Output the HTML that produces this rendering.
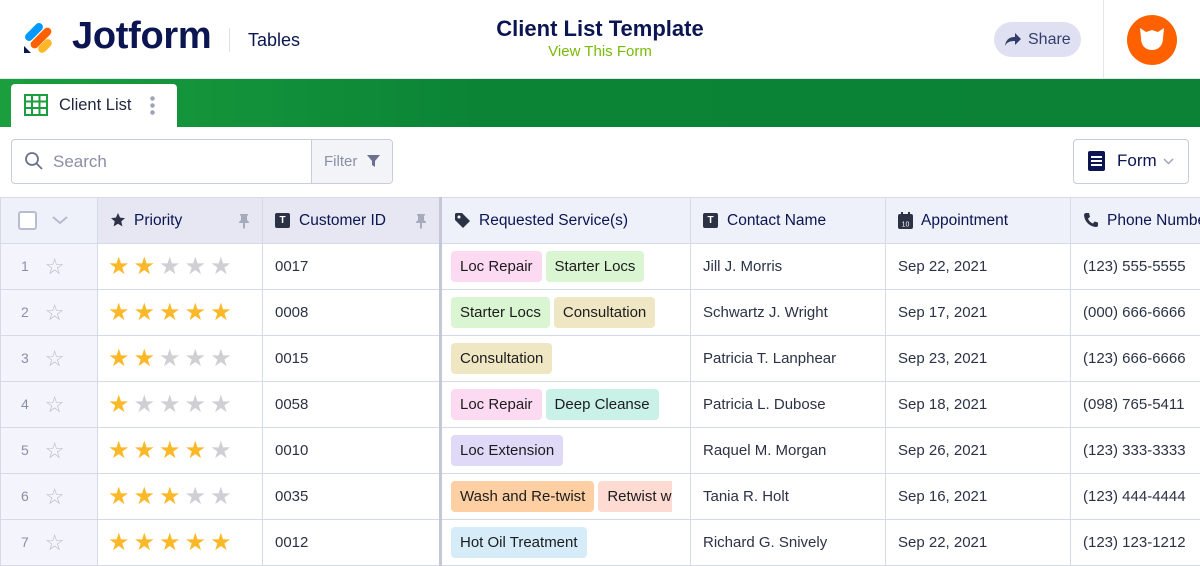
<!DOCTYPE html>
<html><head><meta charset="utf-8"><style>
*{box-sizing:border-box;margin:0;padding:0}
body{width:1200px;height:566px;overflow:hidden;background:#fff;font-family:"Liberation Sans",sans-serif;color:#0a1551;position:relative}
.hdr{position:absolute;left:0;top:0;width:1200px;height:79px;background:#fff;border-bottom:1px solid #e3e5f0}
.green{position:absolute;left:0;top:79px;width:1200px;height:48px;background:linear-gradient(90deg,#1a9e3e,#0b8436 40%,#0b8236)}
.tab{position:absolute;left:11px;top:84px;width:166px;height:43px;background:#fff;border-radius:4px 4px 0 0}
.abs{position:absolute}
table{position:absolute;left:0;top:197px;width:1210px;border-collapse:collapse;table-layout:fixed}
td,th{border:1px solid #d6d9e8;height:46px;font-size:15px;color:#2b3245;font-weight:normal;text-align:left;padding:0 12px;white-space:nowrap;overflow:hidden;vertical-align:middle;line-height:20px}
th{background:#eef0fa;color:#0a1551;font-size:15.5px;height:46px}
th.dk{background:#e6e7f2}
td.rn{background:#f3f4fc;color:#8a8fa6;font-size:14px;padding-left:20px}
.tag{display:inline-block;padding:0 9px;height:31px;line-height:31px;border-radius:4px;margin-right:4px;color:#1c1c1c;vertical-align:middle}
.st{font-size:24px;letter-spacing:4px;padding-left:10px}
.y{color:#fbb829}.g{color:#cfcfd4}
.ic{display:inline-block;vertical-align:middle;margin-right:8px}
.T{display:inline-block;width:15px;height:15px;background:#2b3245;color:#fff;font-size:10px;text-align:center;line-height:15px;border-radius:2px;vertical-align:middle;margin-right:9px;font-weight:bold}
.pin{float:right;margin-top:2px}
.rs{margin-left:16px;font-size:22px;color:#b8bccd;vertical-align:middle}
</style></head><body>
<div class="hdr">
 <svg class="abs" style="left:22px;top:20px" width="34" height="34" viewBox="0 0 34 34">
  <rect x="1" y="8" width="22" height="8" rx="4" transform="rotate(-45 12 12)" fill="#0099ff"/>
  <rect x="6" y="14" width="26" height="8" rx="4" transform="rotate(-45 19 18)" fill="#ff6100"/>
  <rect x="15" y="22" width="16" height="8" rx="4" transform="rotate(-45 23 26)" fill="#ffb629"/>
  <path d="M2 26 L2 33 L9 33 Z" fill="#0a1551"/>
 </svg>
 <div class="abs" style="left:72px;top:15px;font-size:38px;font-weight:bold;color:#0a1551;letter-spacing:-0.3px">Jotform</div>
 <div class="abs" style="left:229px;top:28px;width:1px;height:24px;background:#dfe1ea"></div>
 <div class="abs" style="left:248px;top:30px;font-size:18px;color:#0a1551">Tables</div>
 <div class="abs" style="left:0;width:1200px;top:16px;text-align:center;font-size:22px;font-weight:bold;color:#0a1551">Client List Template</div>
 <div class="abs" style="left:0;width:1200px;top:43px;text-align:center;font-size:15px;color:#78bb07">View This Form</div>
 <div class="abs" style="left:994px;top:22px;width:87px;height:35px;border-radius:18px;background:#dfe1f3;font-size:16px;color:#343c6a;line-height:35px;padding-left:34px">Share</div>
 <svg class="abs" style="left:1004px;top:32px" width="18" height="15" viewBox="0 0 18 15"><path d="M1 14 C2 7 6 5 11 5 L11 1 L17 7 L11 13 L11 9 C6 9 3 10 1 14Z" fill="#343c6a"/></svg>
 <div class="abs" style="left:1103px;top:0;width:1px;height:79px;background:#e3e5f0"></div>
 <div class="abs" style="left:1127px;top:15px;width:50px;height:50px;border-radius:50%;background:#ff6100"></div>
 <svg class="abs" style="left:1137px;top:24px" width="30" height="28" viewBox="0 0 30 28"><path d="M3 4 L9 8 L15 6 L21 8 L27 4 L26 14 C26 22 21 26 15 26 C9 26 4 22 4 14 Z" fill="#fff"/></svg>
</div>
<div class="green"></div>
<div class="tab">
 <svg class="abs" style="left:13px;top:10px" width="24" height="22" viewBox="0 0 24 22"><rect x="1" y="1" width="22" height="20" fill="none" stroke="#1a9e3e" stroke-width="2"/><path d="M1 7.5H23M1 14H23M8 1V21M15.5 1V21" stroke="#1a9e3e" stroke-width="2"/></svg>
 <div class="abs" style="left:48px;top:12px;font-size:16.5px;color:#1f2540">Client List</div>
 <div class="abs" style="left:139px;top:11px;width:5px;height:20px;background:radial-gradient(circle,#9ea3b8 2px,transparent 2.5px) 0 0/5px 7px repeat-y"></div>
</div>
<div class="abs" style="left:11px;top:139px;width:382px;height:45px;border:1px solid #c8ccdc;border-radius:4px"></div>
<div class="abs" style="left:311px;top:140px;width:81px;height:43px;background:#f3f4f8;border-left:1px solid #c8ccdc;border-radius:0 4px 4px 0;font-size:15px;color:#8a8fa6;line-height:43px;padding-left:12px">Filter</div>
<svg class="abs" style="left:367px;top:155px" width="13" height="13" viewBox="0 0 13 13"><path d="M0 0H13L8 6V12L5 10V6Z" fill="#6b7091"/></svg>
<svg class="abs" style="left:25px;top:152px" width="18" height="18" viewBox="0 0 18 18"><circle cx="7" cy="7" r="6" fill="none" stroke="#6b7091" stroke-width="1.8"/><path d="M11.5 11.5L17 17" stroke="#6b7091" stroke-width="1.8"/></svg>
<div class="abs" style="left:53px;top:152px;font-size:17px;color:#8a8fa6">Search</div>
<div class="abs" style="left:1073px;top:139px;width:116px;height:45px;border:1px solid #c8ccdc;border-radius:4px"></div>
<div class="abs" style="left:1088px;top:151px;width:17px;height:20px;background:#0a1551;border-radius:2px"></div>
<div class="abs" style="left:1091px;top:156px;width:11px;height:2px;background:#fff"></div>
<div class="abs" style="left:1091px;top:160px;width:11px;height:2px;background:#fff"></div>
<div class="abs" style="left:1091px;top:164px;width:11px;height:2px;background:#fff"></div>
<div class="abs" style="left:1117px;top:151px;font-size:17px;color:#0a1551">Form</div>
<svg class="abs" style="left:1163px;top:158px" width="11" height="7" viewBox="0 0 11 7"><path d="M1 1L5.5 5.5L10 1" fill="none" stroke="#9ea3b8" stroke-width="1.5"/></svg>
<table>
<colgroup><col style="width:97px"><col style="width:165px"><col style="width:178px"><col style="width:250px"><col style="width:195px"><col style="width:185px"><col style="width:140px"></colgroup>
<tr><th style="padding-left:17px"><span style="display:inline-block;width:19px;height:19px;border:2px solid #b8bccd;border-radius:3px;vertical-align:middle;background:#fff"></span><svg style="margin-left:15px;vertical-align:middle" width="16" height="9" viewBox="0 0 16 9"><path d="M1 1L8 7L15 1" fill="none" stroke="#b8bccd" stroke-width="2"/></svg></th>
<th class="dk"><svg class="ic" width="16" height="16" viewBox="0 0 24 24"><path d="M12 1.5l3.1 6.9 7.4.7-5.6 5 1.7 7.4L12 17.6l-6.6 3.9 1.7-7.4-5.6-5 7.4-.7z" fill="#2b3245"/></svg>Priority<svg class="pin" width="12" height="16" viewBox="0 0 12 16"><path d="M2 1H10V2L9 3V7L11 9V10H7V15L6 16L5 15V10H1V9L3 7V3L2 2Z" fill="#a6aabd"/></svg></th>
<th class="dk" style="border-right:3px solid #c4c7d6"><span class="T">T</span>Customer ID<svg class="pin" width="12" height="16" viewBox="0 0 12 16"><path d="M2 1H10V2L9 3V7L11 9V10H7V15L6 16L5 15V10H1V9L3 7V3L2 2Z" fill="#a6aabd"/></svg></th>
<th><svg class="ic" width="17" height="17" viewBox="0 0 17 17"><path d="M1 2V8L9 16L16 9L8 1H2Z" fill="#2b3245"/><circle cx="5" cy="5" r="1.5" fill="#fff"/></svg>Requested Service(s)</th>
<th><span class="T">T</span>Contact Name</th>
<th><svg class="ic" width="15" height="17" viewBox="0 0 15 17"><rect x="0" y="2" width="15" height="15" rx="2" fill="#2b3245"/><rect x="3" y="0" width="2" height="4" fill="#2b3245"/><rect x="10" y="0" width="2" height="4" fill="#2b3245"/><text x="7.5" y="14.5" font-size="7" fill="#fff" text-anchor="middle" font-family="Liberation Sans">10</text></svg>Appointment</th>
<th><svg class="ic" width="16" height="16" viewBox="0 0 16 16"><path d="M3 1L6 1L7 5L5 6.5C6 9 7.5 10.5 10 11.5L11.5 9.5L15 10.5V13.5C15 14.5 14 15 13 15C6.5 14.5 1.5 9.5 1 3C1 2 2 1 3 1Z" fill="#2b3245"/></svg>Phone Number</th></tr>
<tr><td class="rn">1<span class="rs">☆</span></td><td class="st"><span class="y">★★</span><span class="g">★★★</span></td><td style="border-right:3px solid #c4c7d6">0017</td><td style="padding-left:9px"><span class="tag" style="background:#fcdaf2">Loc Repair</span><span class="tag" style="background:#daf5d2">Starter Locs</span></td><td>Jill J. Morris</td><td>Sep 22, 2021</td><td>(123) 555-5555</td></tr>
<tr><td class="rn">2<span class="rs">☆</span></td><td class="st"><span class="y">★★★★★</span></td><td style="border-right:3px solid #c4c7d6">0008</td><td style="padding-left:9px"><span class="tag" style="background:#daf5d2">Starter Locs</span><span class="tag" style="background:#efe7c4">Consultation</span></td><td>Schwartz J. Wright</td><td>Sep 17, 2021</td><td>(000) 666-6666</td></tr>
<tr><td class="rn">3<span class="rs">☆</span></td><td class="st"><span class="y">★★</span><span class="g">★★★</span></td><td style="border-right:3px solid #c4c7d6">0015</td><td style="padding-left:9px"><span class="tag" style="background:#efe7c4">Consultation</span></td><td>Patricia T. Lanphear</td><td>Sep 23, 2021</td><td>(123) 666-6666</td></tr>
<tr><td class="rn">4<span class="rs">☆</span></td><td class="st"><span class="y">★</span><span class="g">★★★★</span></td><td style="border-right:3px solid #c4c7d6">0058</td><td style="padding-left:9px"><span class="tag" style="background:#fcdaf2">Loc Repair</span><span class="tag" style="background:#c9f1e8">Deep Cleanse</span></td><td>Patricia L. Dubose</td><td>Sep 18, 2021</td><td>(098) 765-5411</td></tr>
<tr><td class="rn">5<span class="rs">☆</span></td><td class="st"><span class="y">★★★★</span><span class="g">★</span></td><td style="border-right:3px solid #c4c7d6">0010</td><td style="padding-left:9px"><span class="tag" style="background:#e0d9f7">Loc Extension</span></td><td>Raquel M. Morgan</td><td>Sep 26, 2021</td><td>(123) 333-3333</td></tr>
<tr><td class="rn">6<span class="rs">☆</span></td><td class="st"><span class="y">★★★</span><span class="g">★★</span></td><td style="border-right:3px solid #c4c7d6">0035</td><td style="padding-left:9px"><span class="tag" style="background:#fdcfa2">Wash and Re-twist</span><span class="tag" style="background:#fddbd2;width:74px;overflow:hidden;border-radius:4px 0 0 4px">Retwist w</span></td><td>Tania R. Holt</td><td>Sep 16, 2021</td><td>(123) 444-4444</td></tr>
<tr><td class="rn">7<span class="rs">☆</span></td><td class="st"><span class="y">★★★★★</span></td><td style="border-right:3px solid #c4c7d6">0012</td><td style="padding-left:9px"><span class="tag" style="background:#d6edf9">Hot Oil Treatment</span></td><td>Richard G. Snively</td><td>Sep 22, 2021</td><td>(123) 123-1212</td></tr>
</table>
</body></html>
